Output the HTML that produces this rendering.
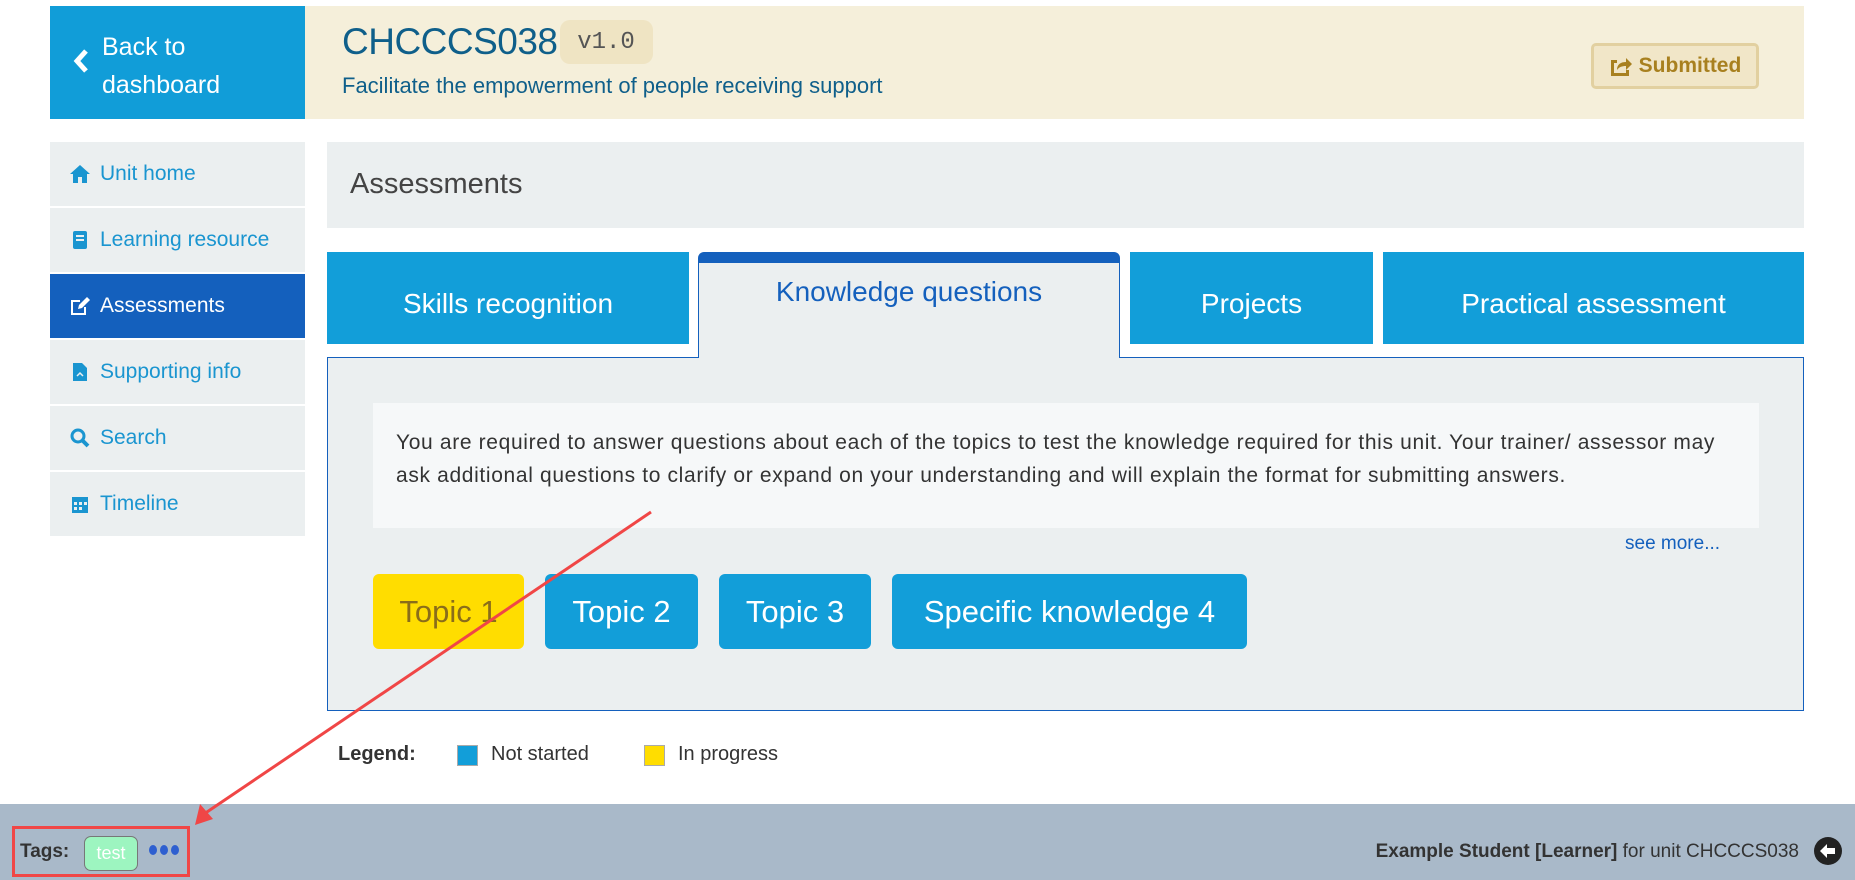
<!DOCTYPE html>
<html><head><meta charset="utf-8"><style>
*{box-sizing:border-box;margin:0;padding:0}
body{width:1855px;height:880px;position:relative;background:#fff;font-family:"Liberation Sans",sans-serif;overflow:hidden}
.a{position:absolute}
.side{left:50px;width:255px;height:64px;background:#ebeff0;color:#1a95d0;font-size:21px;display:flex;align-items:center;padding-left:18px}
.side svg{margin-right:8px}
.side .ic{width:24px;display:flex;justify-content:center;margin-right:8px}
.side .ic svg{margin:0}
.tab{top:252px;height:92px;background:#129ed9;color:#fff;font-size:28px;display:flex;align-items:center;justify-content:center;padding-top:12px}
.btn{top:574px;height:75px;border-radius:6px;background:#129ed9;color:#fff;font-size:31px;display:flex;align-items:center;justify-content:center}
</style></head><body>
<div class="a" style="left:50px;top:6px;width:255px;height:113px;background:#119dd8;color:#fff;font-size:25px;line-height:38px;padding:22px 0 0 52px">Back to<br>dashboard</div>
<svg class="a" style="left:73px;top:48px" width="16" height="26" viewBox="0 0 16 26"><path d="M13 3 L4 13 L13 23" stroke="#fff" stroke-width="5" fill="none"/></svg>
<div class="a" style="left:305px;top:6px;width:1499px;height:113px;background:#f5efda"></div>
<div class="a" style="left:342px;top:20px;display:flex;align-items:center;gap:2px"><span style="font-size:37px;color:#0f5f8a;letter-spacing:-0.5px">CHCCCS038</span><span style="width:93px;height:44px;background:#efe4c3;border-radius:10px;font-family:'Liberation Mono',monospace;font-size:24px;color:#555;display:flex;align-items:center;justify-content:center">v1.0</span></div>
<div class="a" style="left:342px;top:73px;font-size:22px;color:#0f5f8a">Facilitate the empowerment of people receiving support</div>
<div class="a" style="left:1591px;top:43px;width:168px;height:46px;border:3px solid #e2d0a0;border-radius:5px;background:#f1e6c8;color:#a8801f;font-weight:bold;font-size:21px;display:flex;align-items:center;justify-content:center;gap:6px"><svg width="24" height="22" viewBox="0 0 24 22"><path d="M2 5h6v3H5v10h12v-3h3v6H2z" fill="#a8801f"/><path d="M8 15c0-6 4-8 9-8V3l6 6-6 6v-4c-4 0-7 1-9 4z" fill="#a8801f"/></svg>Submitted</div>

<div class="a side" style="top:142px"><span class="ic"><svg width="22" height="20" viewBox="0 0 22 20"><path d="M11 1L1 10h3v9h5v-6h4v6h5v-9h3z" fill="#1a95d0"/></svg></span>Unit home</div>
<div class="a side" style="top:208px"><span class="ic"><svg width="16" height="20" viewBox="0 0 16 20"><rect x="1" y="1" width="14" height="18" rx="2" fill="#1a95d0"/><rect x="4" y="5" width="8" height="2" fill="#ebeff0"/><rect x="4" y="9" width="8" height="2" fill="#ebeff0"/></svg></span>Learning resource</div>
<div class="a side" style="top:274px;background:#1460bd;color:#fff"><span class="ic"><svg width="22" height="20" viewBox="0 0 22 20"><path d="M2 4h9v2H4v11h11v-6h2v8H2z" fill="#fff"/><path d="M9 13l1-4 8-8 3 3-8 8z" fill="#fff"/></svg></span>Assessments</div>
<div class="a side" style="top:340px"><span class="ic"><svg width="16" height="20" viewBox="0 0 16 20"><path d="M1 1h9l5 5v13H1z" fill="#1a95d0"/><path d="M5 14l3-3 3 3" stroke="#ebeff0" stroke-width="1.5" fill="none"/></svg></span>Supporting info</div>
<div class="a side" style="top:406px"><span class="ic"><svg width="20" height="20" viewBox="0 0 20 20"><circle cx="8" cy="8" r="6" stroke="#1a95d0" stroke-width="3" fill="none"/><path d="M12 12l6 6" stroke="#1a95d0" stroke-width="4"/></svg></span>Search</div>
<div class="a side" style="top:472px"><span class="ic"><svg width="18" height="20" viewBox="0 0 18 20"><rect x="1" y="3" width="16" height="16" fill="#1a95d0"/><rect x="3" y="8" width="3" height="3" fill="#ebeff0"/><rect x="8" y="8" width="3" height="3" fill="#ebeff0"/><rect x="13" y="8" width="3" height="3" fill="#ebeff0"/><rect x="3" y="13" width="3" height="3" fill="#ebeff0"/><rect x="8" y="13" width="3" height="3" fill="#ebeff0"/></svg></span>Timeline</div>

<div class="a" style="left:327px;top:142px;width:1477px;height:86px;background:#ebeff0;font-size:29px;color:#444;padding:26px 0 0 23px">Assessments</div>

<div class="a" style="left:327px;top:357px;width:1477px;height:354px;background:#ebeff0;border:1px solid #1460bd"></div>
<div class="a tab" style="left:327px;width:362px">Skills recognition</div>
<div class="a" style="left:698px;top:252px;width:422px;height:106px;background:#ebeff0;border:1px solid #1460bd;border-top:11px solid #1460bd;border-bottom:none;border-radius:6px 6px 0 0;color:#1460bd;font-size:28px;text-align:center;padding-top:13px">Knowledge questions</div>
<div class="a tab" style="left:1130px;width:243px">Projects</div>
<div class="a tab" style="left:1383px;width:421px">Practical assessment</div>

<div class="a" style="left:373px;top:403px;width:1386px;height:125px;background:#f6f8f9;font-size:21px;line-height:33px;color:#333;padding:23px 0 0 23px;white-space:nowrap;letter-spacing:0.65px">You are required to answer questions about each of the topics to test the knowledge required for this unit. Your trainer/ assessor may<br>ask additional questions to clarify or expand on your understanding and will explain the format for submitting answers.</div>
<div class="a" style="left:1625px;top:533px;font-size:19px;color:#1460bd">see more...</div>
<div class="a btn" style="left:373px;width:151px;background:#ffdd00;color:#8a6d1a">Topic 1</div>
<div class="a btn" style="left:545px;width:153px">Topic 2</div>
<div class="a btn" style="left:719px;width:152px">Topic 3</div>
<div class="a btn" style="left:892px;width:355px">Specific knowledge 4</div>

<div class="a" style="left:338px;top:743px;font-size:20px;font-weight:bold;color:#333">Legend:</div>
<div class="a" style="left:457px;top:745px;width:21px;height:21px;background:#129ed9;border:1px solid #aaa"></div>
<div class="a" style="left:491px;top:743px;font-size:20px;color:#333">Not started</div>
<div class="a" style="left:644px;top:745px;width:21px;height:21px;background:#ffdd00;border:1px solid #aaa"></div>
<div class="a" style="left:678px;top:743px;font-size:20px;color:#333">In progress</div>

<div class="a" style="left:0;top:804px;width:1855px;height:76px;background:#a9b9c9"></div>
<div class="a" style="left:20px;top:841px;font-size:19px;font-weight:bold;color:#333">Tags:</div>
<div class="a" style="left:84px;top:836px;width:54px;height:35px;background:#9df5c0;border:1px solid #777;border-radius:7px;color:#fff;font-size:18px;display:flex;align-items:center;justify-content:center">test</div>
<div class="a" style="left:149px;top:845px;display:flex;gap:3px"><i style="width:8px;height:10px;border-radius:50%;background:#2e5fd0"></i><i style="width:8px;height:10px;border-radius:50%;background:#2e5fd0"></i><i style="width:8px;height:10px;border-radius:50%;background:#2e5fd0"></i></div>
<div class="a" style="left:12px;top:826px;width:178px;height:51px;border:3px solid #f04646"></div>
<div class="a" style="right:56px;top:841px;font-size:19px;color:#333"><b>Example Student [Learner]</b> for unit CHCCCS038</div>
<svg class="a" style="left:1813px;top:836px" width="30" height="30" viewBox="0 0 30 30"><circle cx="15" cy="15" r="14" fill="#222"/><path d="M7 15l7-7v4h8v6h-8v4z" fill="#fff"/></svg>

<svg class="a" style="left:0;top:0" width="1855" height="880"><line x1="651" y1="512" x2="204" y2="814" stroke="#f04646" stroke-width="3"/><path d="M195 825 L200 804 L213 819 Z" fill="#f04646"/></svg>
</body></html>
